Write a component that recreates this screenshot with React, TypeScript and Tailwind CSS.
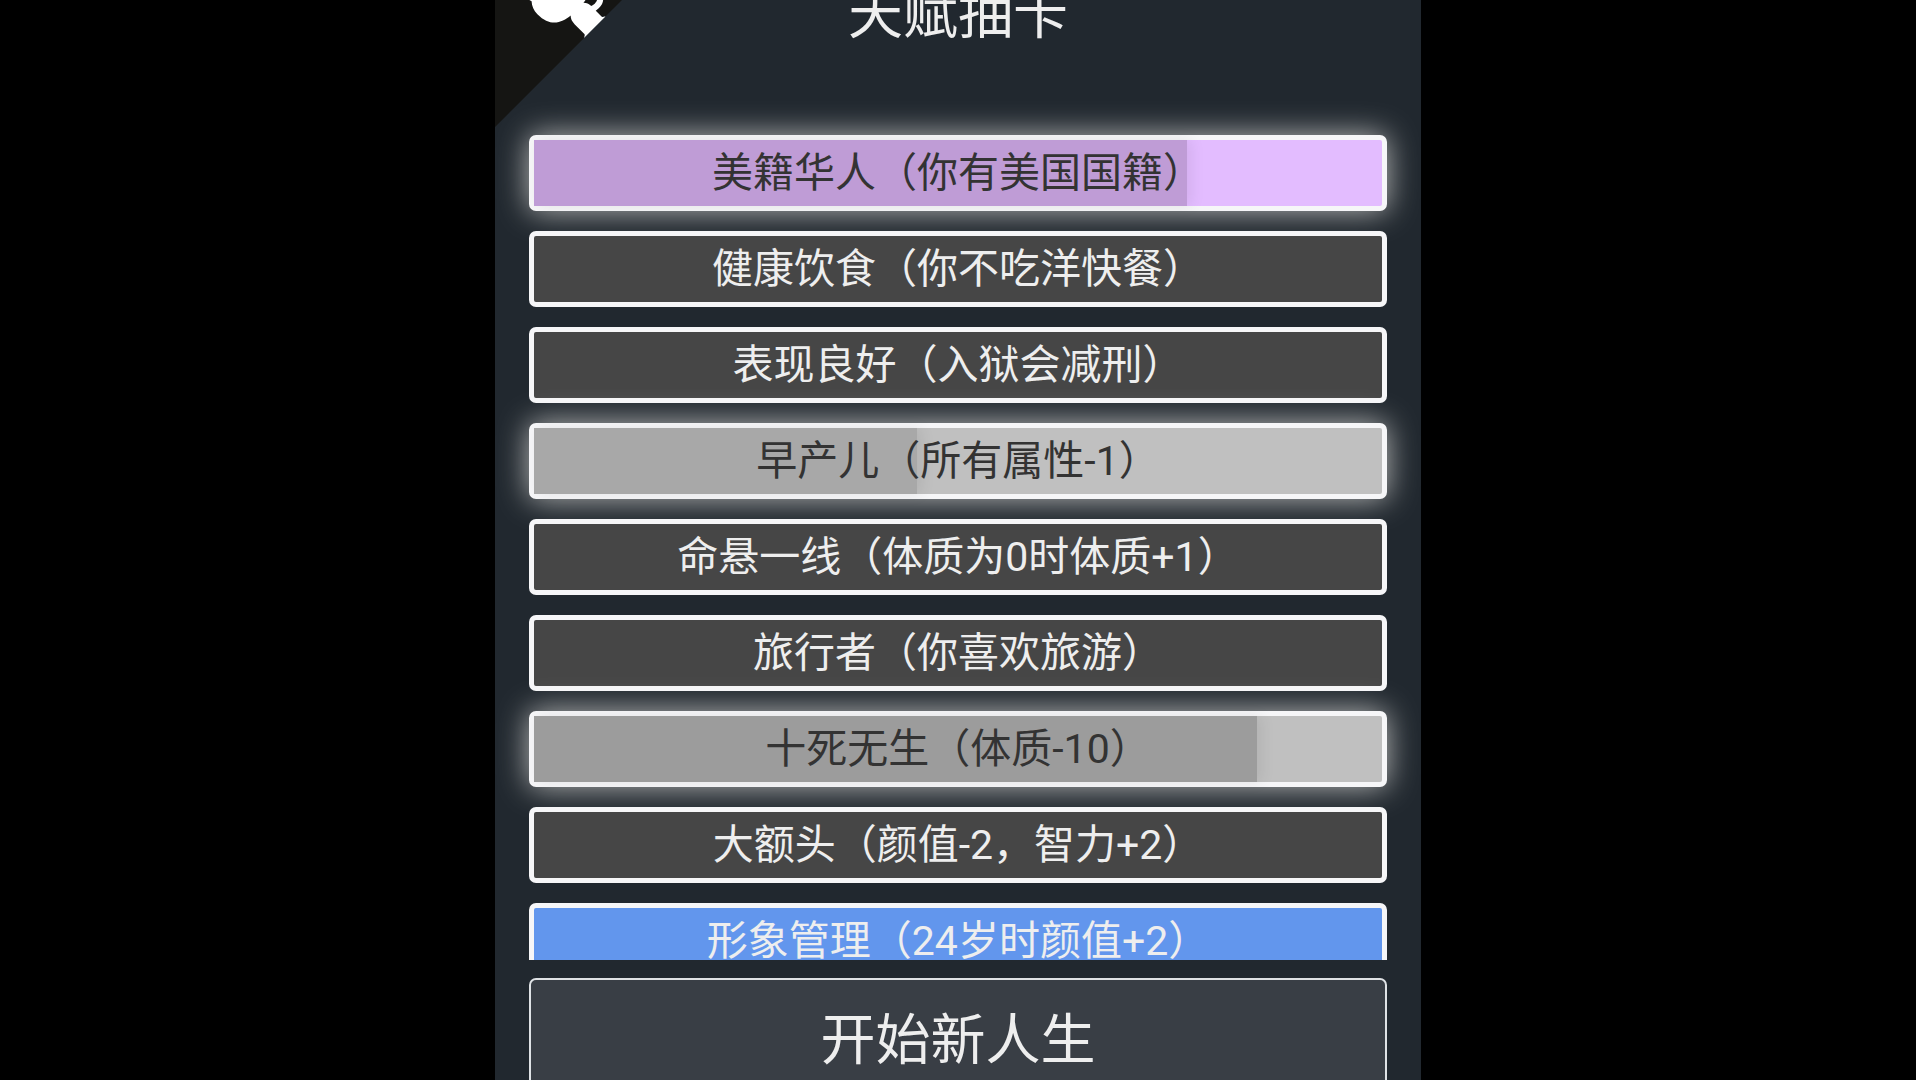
import { useState } from "react";

type Tone = "common" | "rare" | "epic";

type Talent = {
  id: number;
  name: string;
  effect: string;
  tone: Tone;
  progress: number;
  fill: string;
};

const TALENTS: Talent[] = [
  { id: 1, name: "美籍华人", effect: "你有美国国籍", tone: "epic", progress: 77, fill: "bg-[#bf9cd6]" },
  { id: 2, name: "健康饮食", effect: "你不吃洋快餐", tone: "common", progress: 0, fill: "bg-[#a8a8a8]" },
  { id: 3, name: "表现良好", effect: "入狱会减刑", tone: "common", progress: 0, fill: "bg-[#a8a8a8]" },
  { id: 4, name: "早产儿", effect: "所有属性-1", tone: "common", progress: 45.2, fill: "bg-[#a8a8a8]" },
  { id: 5, name: "命悬一线", effect: "体质为0时体质+1", tone: "common", progress: 0, fill: "bg-[#a8a8a8]" },
  { id: 6, name: "旅行者", effect: "你喜欢旅游", tone: "common", progress: 0, fill: "bg-[#a8a8a8]" },
  { id: 7, name: "十死无生", effect: "体质-10", tone: "common", progress: 85.3, fill: "bg-[#9c9c9c]" },
  { id: 8, name: "大额头", effect: "颜值-2，智力+2", tone: "common", progress: 0, fill: "bg-[#a8a8a8]" },
  { id: 9, name: "形象管理", effect: "24岁时颜值+2", tone: "rare", progress: 0, fill: "bg-[#a8a8a8]" },
];

const IDLE: Record<Tone, string> = {
  common: "bg-[#464646] text-[#eeeeee]",
  rare: "bg-[#6296ed] text-[#eeeeee]",
  epic: "bg-[#bf9cd6] text-[#eeeeee]",
};

const PICKED: Record<Tone, string> = {
  common: "bg-[#c0c0c0] text-[#333333]",
  rare: "bg-[#a5c6ff] text-[#333333]",
  epic: "bg-[#e3bcff] text-[#333333]",
};

function GithubCorner() {
  return (
    <a href="#source" aria-label="GitHub" className="absolute -top-[78px] left-0">
      <svg viewBox="0 0 250 250" className="block size-[205px] -scale-x-100" aria-hidden="true">
        <path fill="#151513" d="M0,0 L115,115 L130,115 L142,142 L250,250 L250,0 Z" />
        <path
          fill="#fff"
          d="M128.3,109.0 C113.8,99.7 119.0,89.6 119.0,89.6 C122.0,82.7 120.5,78.6 120.5,78.6 C119.2,72.0 123.4,76.3 123.4,76.3 C127.3,80.9 125.5,87.3 125.5,87.3 C122.9,97.6 130.6,101.9 134.4,103.2"
        />
        <path
          fill="#fff"
          d="M115.0,115.0 C114.9,115.1 118.7,116.5 119.8,115.4 L133.7,101.6 C136.9,99.2 139.9,98.4 142.2,98.6 C133.8,88.0 127.5,74.4 143.8,58.0 C148.5,53.4 154.0,51.2 159.7,51.0 C160.3,49.4 163.2,43.6 171.4,40.1 C171.4,40.1 176.1,42.5 178.8,56.2 C183.1,58.6 187.2,61.8 190.9,65.4 C194.5,69.0 197.7,73.2 200.1,77.6 C213.8,80.2 216.3,84.9 216.3,84.9 C212.7,93.1 206.9,96.0 205.4,96.6 C205.1,102.4 203.0,107.8 198.3,112.5 C181.9,128.9 168.3,122.5 157.7,114.1 C157.9,116.9 156.7,120.9 152.7,124.9 L141.0,136.5 C139.8,137.7 141.6,141.9 141.8,141.8 Z"
        />
      </svg>
    </a>
  );
}

function TalentButton({ talent, picked, onToggle }: { talent: Talent; picked: boolean; onToggle: () => void }) {
  return (
    <button
      type="button"
      aria-pressed={picked}
      onClick={onToggle}
      className={`relative flex h-[76px] w-full items-center justify-center rounded-[7px] border-[5px] border-[#f6f6f8] text-[41px] leading-none whitespace-nowrap ${
        picked ? `${PICKED[talent.tone]} shadow-[0_0_31px_rgba(255,253,250,0.7)]` : IDLE[talent.tone]
      }`}
    >
      {picked && talent.progress > 0 && (
        <span
          className={`absolute inset-y-0 left-0 shadow-[4px_0_14px_rgba(0,0,0,0.08)] ${talent.fill}`}
          style={{ width: `${talent.progress}%` }}
        />
      )}
      <span className="relative">
        {talent.name}（{talent.effect}）
      </span>
    </button>
  );
}

export default function App() {
  const [picked, setPicked] = useState<number[]>([1, 4, 7]);

  const toggle = (id: number) =>
    setPicked((now) => (now.includes(id) ? now.filter((n) => n !== id) : [...now, id]));

  return (
    <div className="h-screen overflow-hidden bg-black font-[Roboto,'Noto_Sans_CJK_SC',sans-serif]">
      <main className="relative mx-auto flex h-full w-full max-w-[926px] flex-col overflow-hidden bg-[#21282f]">
        <GithubCorner />
        <header className="-mt-3.5 shrink-0 text-center">
          <h1 className="text-[55px] leading-[56px] text-[#eeeeee]">天赋抽卡</h1>
        </header>
        <ul className="flex min-h-0 flex-1 flex-col gap-5 overflow-hidden px-[34px] pt-[93px]">
          {TALENTS.map((talent) => (
            <li key={talent.id} className="shrink-0">
              <TalentButton
                talent={talent}
                picked={picked.includes(talent.id)}
                onToggle={() => toggle(talent.id)}
              />
            </li>
          ))}
        </ul>
        <footer className="h-[120px] shrink-0 px-[34px] pt-[18px]">
          <button
            type="button"
            className="h-32 w-full rounded-[7px] border-2 border-[#dfe2e5] bg-[#393e45] pb-1 text-[55px] leading-none text-[#eeeeee]"
          >
            开始新人生
          </button>
        </footer>
      </main>
    </div>
  );
}
